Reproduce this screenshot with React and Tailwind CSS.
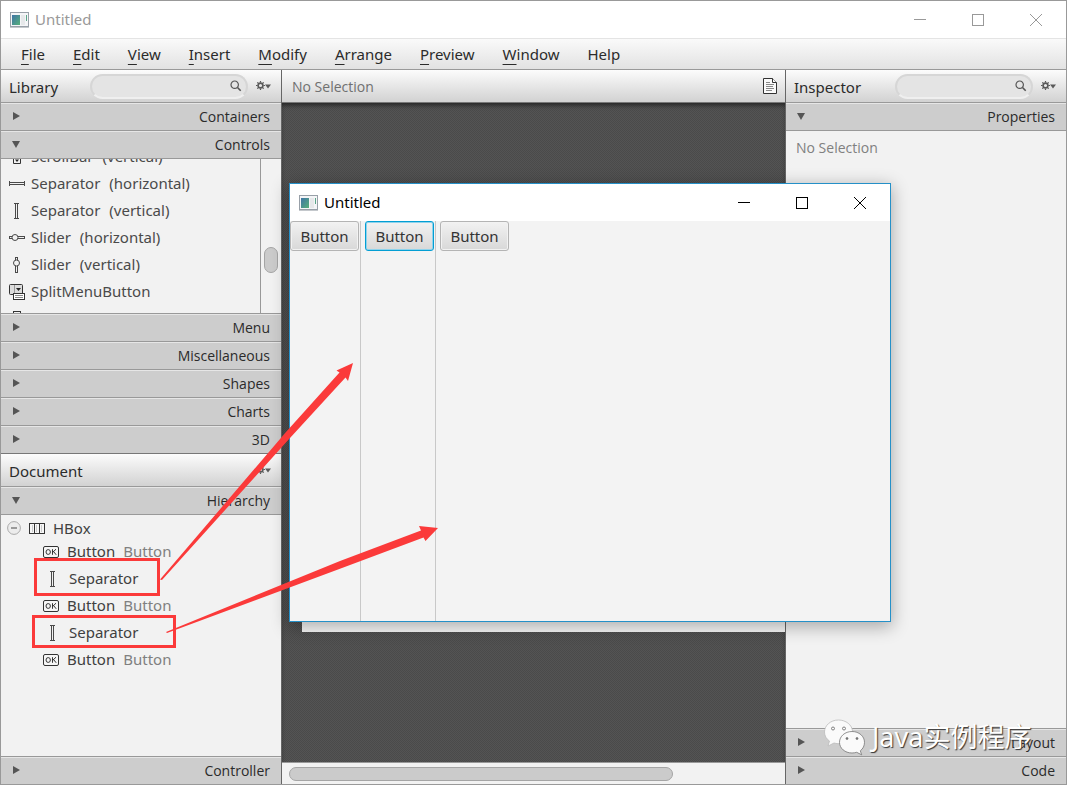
import React from 'react';

const MENUS = ['File', 'Edit', 'View', 'Insert', 'Modify', 'Arrange', 'Preview', 'Window'];

function AppIcon() {
  return (
    <svg width="19" height="16" viewBox="0 0 19 16" className="shrink-0">
      <defs>
        <linearGradient id="appIconFill" x1="0" y1="0" x2="1" y2="1">
          <stop offset="0" stopColor="#3f74a6" />
          <stop offset="1" stopColor="#56b07a" />
        </linearGradient>
      </defs>
      <rect x="0.5" y="0.5" width="18" height="14" fill="#f4f5f7" stroke="#98a0a8" />
      <rect x="2" y="3" width="8" height="10" fill="url(#appIconFill)" />
      <rect x="11" y="3" width="4" height="10" fill="#e6e8ea" />
      <rect x="16" y="3" width="1" height="6" fill="#5aa588" />
      <path d="M0 15.5h19" stroke="#c4c8cc" />
    </svg>
  );
}

function WindowControls({ color }) {
  return (
    <div className={`flex gap-[46px] ${color}`}>
      <button aria-label="Minimize">
        <svg width="12" height="12" viewBox="0 0 12 12" stroke="currentColor" shapeRendering="crispEdges">
          <path d="M0 5.5h12" />
        </svg>
      </button>
      <button aria-label="Maximize">
        <svg width="12" height="12" viewBox="0 0 12 12" fill="none" stroke="currentColor" shapeRendering="crispEdges">
          <rect x="0.5" y="0.5" width="11" height="11" />
        </svg>
      </button>
      <button aria-label="Close">
        <svg width="12" height="12" viewBox="0 0 12 12" stroke="currentColor">
          <path d="M0 0l12 12M12 0L0 12" />
        </svg>
      </button>
    </div>
  );
}

function Gear() {
  return (
    <button aria-label="Options" className="text-[#5a5a5a]">
      <svg width="15" height="10" viewBox="0 0 15 10" fill="none" stroke="currentColor">
        <circle cx="4.5" cy="4.5" r="2.4" strokeWidth="1.6" />
        <path d="M4.5 0v1.6M4.5 7.4V9M0 4.5h1.6M7.4 4.5H9M1.3 1.3l1.1 1.1M6.6 6.6l1.1 1.1M7.7 1.3L6.6 2.4M2.4 6.6L1.3 7.7" strokeWidth="1.2" />
        <path d="M9 3.5h6L12 7.5z" fill="currentColor" stroke="none" />
      </svg>
    </button>
  );
}

function PanelHeader({ title, search }) {
  return (
    <div className="flex h-[33px] shrink-0 items-center gap-2 border-b border-[#999] bg-linear-to-b from-[#fcfcfc] to-[#d2d2d2] pr-[10px] pl-2">
      <h2 className="grow pt-px text-[15px] leading-5 text-[#2b2b2b]">{title}</h2>
      {search && (
        <label className={`flex h-[25px] items-center rounded-full border-2 border-[#d6d6d6] border-b-[#efefef] bg-[#e4e4e4] pr-1 ${search}`}>
          <input type="text" aria-label={`Search ${title}`} className="w-full min-w-0 bg-transparent px-2 text-xs outline-none" />
          <svg width="12" height="12" viewBox="0 0 12 12" fill="none" stroke="#555" className="shrink-0">
            <circle cx="4.7" cy="4.7" r="3.7" strokeWidth="1.2" />
            <path d="M7.5 7.5l3.2 3.2" strokeWidth="1.6" />
          </svg>
        </label>
      )}
      <Gear />
    </div>
  );
}

function Pane({ title, open }) {
  return (
    <button className="flex h-7 w-full shrink-0 items-center justify-between border-b border-[#999] bg-[#cdcdcd] px-[11px] shadow-[inset_0_1px_0_#e6e6e6] last:h-[27px] last:border-b-0">
      <svg width="9" height="10" viewBox="0 0 9 10" fill="#555">
        {open ? <path d="M0 1h8L4 8z" /> : <path d="M1 0l7 4-7 4z" />}
      </svg>
      <span className="font-['Open_Sans',sans-serif] text-sm text-[#2b2b2b]">{title}</span>
    </button>
  );
}

function SeparatorIcon({ vertical }) {
  return (
    <svg width="16" height="16" viewBox="0 0 16 16" fill="none" stroke="#4a4a4a" shapeRendering="crispEdges" className="shrink-0">
      {vertical ? (
        <path d="M6.5 1v14M8.5 1v14M5 0.5h5M5 15.5h5" />
      ) : (
        <path d="M1 6.5h14M1 8.5h14M0.5 5v5M15.5 5v5" />
      )}
    </svg>
  );
}

function SliderIcon({ vertical }) {
  return (
    <svg width="16" height="16" viewBox="0 0 16 16" fill="#f2f2f2" stroke="#4a4a4a" className="shrink-0">
      {vertical ? (
        <>
          <rect x="6.5" y="0.5" width="2" height="15" />
          <circle cx="7.5" cy="6" r="3" />
        </>
      ) : (
        <>
          <rect x="0.5" y="6.5" width="15" height="2" />
          <circle cx="6" cy="7.5" r="3" />
        </>
      )}
    </svg>
  );
}

function ScrollBarIcon() {
  return (
    <svg width="16" height="16" viewBox="0 0 16 16" fill="none" stroke="#333" className="shrink-0">
      <path d="M4.5 0v14.5h7V0M4.5 0.5h7M4.5 8.5h7" />
      <path d="M6 10.5h4L8 13z" fill="#222" stroke="none" />
    </svg>
  );
}

function SplitMenuIcon() {
  return (
    <svg width="16" height="16" viewBox="0 0 16 16" fill="none" stroke="#333" className="shrink-0">
      <rect x="0.5" y="0.5" width="13" height="10" rx="1" fill="#dcdcdc" />
      <path d="M5.5 1v9" stroke="#999" />
      <path d="M7 4h5L9.5 7z" fill="#222" stroke="none" />
      <rect x="4.5" y="9.5" width="11" height="6" fill="#fff" />
      <path d="M6 11.5h8M6 13.5h8" stroke="#888" />
    </svg>
  );
}

function OkIcon() {
  return (
    <svg width="16" height="12" viewBox="0 0 16 12" fill="none" stroke="#333" className="shrink-0">
      <rect x="0.5" y="0.5" width="15" height="11" rx="1.5" fill="#f6f6f6" />
      <ellipse cx="5.2" cy="6" rx="2.2" ry="2.4" />
      <path d="M9.5 3.2v5.6M13 3.2L9.9 6.2M10.6 5.6L13.2 8.8" />
    </svg>
  );
}

const CONTROLS = [
  { label: 'ScrollBar', kind: '(vertical)', icon: <ScrollBarIcon /> },
  { label: 'Separator', kind: '(horizontal)', icon: <SeparatorIcon /> },
  { label: 'Separator', kind: '(vertical)', icon: <SeparatorIcon vertical /> },
  { label: 'Slider', kind: '(horizontal)', icon: <SliderIcon /> },
  { label: 'Slider', kind: '(vertical)', icon: <SliderIcon vertical /> },
  { label: 'SplitMenuButton', icon: <SplitMenuIcon /> },
  { label: 'SubScene', icon: <ScrollBarIcon /> },
];

function Library() {
  return (
    <section className="shrink-0 border-b border-[#777]">
      <PanelHeader title="Library" search="w-[158px]" />
      <Pane title="Containers" />
      <Pane title="Controls" open />
      <div className="flex h-[155px] overflow-hidden border-b border-[#999]">
        <ul className="-mt-4 grow pl-2">
          {CONTROLS.map((c) => (
            <li key={c.label + c.kind} className="flex h-[27px] items-center gap-[6px] text-[15px] text-[#4a4a4a]">
              {c.icon}
              <span>{c.label}</span>
              {c.kind && <span className="pl-[3px]">{c.kind}</span>}
            </li>
          ))}
        </ul>
        <div className="w-[21px] shrink-0 border-l border-[#999] px-[3px] pt-[88px]">
          <div className="h-[26px] w-[14px] rounded-full border border-[#a5a5a5] bg-[#cbcbcb]" />
        </div>
      </div>
      {['Menu', 'Miscellaneous', 'Shapes', 'Charts', '3D'].map((t) => (
        <Pane key={t} title={t} />
      ))}
    </section>
  );
}

function TreeButton() {
  return (
    <li className="flex h-[27px] items-center gap-2 pl-[42px]">
      <OkIcon />
      <span>Button</span>
      <span className="text-[#808080]">Button</span>
    </li>
  );
}

function TreeSeparator() {
  return (
    <li className="flex h-[27px] items-center gap-2 pl-11">
      <SeparatorIcon vertical />
      <span>Separator</span>
    </li>
  );
}

function DocumentPanel() {
  return (
    <section className="flex grow flex-col">
      <PanelHeader title="Document" />
      <Pane title="Hierarchy" open />
      <ul className="grow border-b border-[#999] text-[15px] text-[#404040]">
        <li className="flex h-[23px] items-center gap-2 pt-[3px] pl-[6px]">
          <button aria-label="Collapse HBox">
            <svg width="14" height="14" viewBox="0 0 14 14" fill="#ececec" stroke="#aaa">
              <circle cx="7" cy="7" r="6.4" />
              <path d="M4 7h6" stroke="#777" strokeWidth="1.4" />
            </svg>
          </button>
          <svg width="16" height="11" viewBox="0 0 16 11" fill="#f6f6f6" stroke="#333" shapeRendering="crispEdges">
            <rect x="0.5" y="0.5" width="15" height="10" />
            <path d="M5.5 1v9M10.5 1v9" />
            <path d="M3.5 2v7M7.5 2v7M12.5 2v7" stroke="#ccc" />
          </svg>
          <span>HBox</span>
        </li>
        <TreeButton />
        <TreeSeparator />
        <TreeButton />
        <TreeSeparator />
        <TreeButton />
      </ul>
      <Pane title="Controller" />
    </section>
  );
}

function Editor() {
  return (
    <main className="flex min-w-0 grow flex-col border-x border-[#666]">
      <div className="flex h-[33px] shrink-0 items-center justify-between border-b border-[#777] bg-linear-to-b from-[#fcfcfc] to-[#d2d2d2] pr-2 pl-[10px]">
        <span className="pt-[2px] font-['Open_Sans',sans-serif] text-sm text-[#707070]">No Selection</span>
        <svg width="14" height="16" viewBox="0 0 14 16" fill="#fafafa" stroke="#333">
          <path d="M0.5 0.5h9l4 4v11H0.5z" />
          <path d="M9.5 0.5v4h4" />
          <path d="M3 4.5h4M3 6.5h8M3 8.5h7M3 10.5h8M3 12.5h6" stroke="#888" />
        </svg>
      </div>
      <div className="grow bg-[repeating-conic-gradient(#4a4a4a_0_25%,#545454_0_50%)] bg-[length:2px_2px] pt-[100px] pl-5 shadow-[inset_0_4px_5px_-2px_#222]">
        <div className="h-[429px] bg-[#f8f8f8]" />
      </div>
      <div className="flex h-[22px] shrink-0 items-center border-t border-[#999] bg-[#f2f2f2] px-[7px]">
        <div className="h-[14px] w-[384px] rounded-full border border-[#a5a5a5] bg-[#cbcbcb]" />
      </div>
    </main>
  );
}

function Inspector() {
  return (
    <aside className="flex w-[280px] shrink-0 flex-col">
      <PanelHeader title="Inspector" search="w-[138px]" />
      <Pane title="Properties" open />
      <p className="grow border-b border-[#999] px-[10px] pt-[7px] font-['Open_Sans',sans-serif] text-sm text-[#808080]">No Selection</p>
      <Pane title="Layout" />
      <Pane title="Code" />
    </aside>
  );
}

function PreviewButton({ focused }) {
  return (
    <button
      className={
        focused
          ? 'h-[30px] w-[69px] rounded-[3px] border border-[#039ed3] bg-linear-to-b from-[#f2f2f2] to-[#d8d8d8] text-[15px] text-[#333] shadow-[inset_0_0_0_1px_#8fd3ec]'
          : 'h-[30px] w-[69px] rounded-[3px] border border-[#b4b4b4] bg-linear-to-b from-[#f2f2f2] to-[#d8d8d8] text-[15px] text-[#333] shadow-[inset_0_0_0_1px_#f2f2f2]'
      }
    >
      Button
    </button>
  );
}

function Divider() {
  return (
    <div className="w-[6px] self-stretch pl-px">
      <div className="h-full w-px bg-[#c8c8c8]" />
    </div>
  );
}

function PreviewWindow() {
  return (
    <div className="absolute top-[182px] left-[288px] flex h-[439px] w-[602px] flex-col border border-[#2590c8] bg-[#f3f3f3] shadow-[0_4px_16px_1px_rgba(0,0,0,0.3)]">
      <div className="flex h-[37px] shrink-0 items-center justify-between bg-white pr-6 pl-[9px]">
        <div className="flex items-center gap-[6px] text-[15px] text-black">
          <AppIcon />
          <span>Untitled</span>
        </div>
        <WindowControls color="text-black" />
      </div>
      <div className="flex grow items-start">
        <PreviewButton />
        <Divider />
        <PreviewButton focused />
        <Divider />
        <PreviewButton />
      </div>
    </div>
  );
}

// red boxes and arrows pointing from the tree to the separators
function Annotations() {
  return (
    <svg width="450" height="660" viewBox="1 1 450 660" className="pointer-events-none absolute top-0 left-0" fill="#fb3a3a">
      <rect x="35.5" y="559.5" width="123" height="35" fill="none" stroke="#fb3a3a" strokeWidth="3" />
      <rect x="33.5" y="616.5" width="141" height="30" fill="none" stroke="#fb3a3a" strokeWidth="3" />
      <path d="M160 579.5L286 432 339.500 372.500 336.500 370.500 353 363 348 381 345.500 377.500 290 438 162 580z" />
      <path d="M166 632L340 561 421 530.500 419 526 438 528 425.500 541 423.500 537.500 342 568 167 633z" />
    </svg>
  );
}

function Watermark() {
  return (
    <div className="pointer-events-none absolute top-[716px] left-[822px] flex items-center gap-[7px]">
      <svg width="42" height="38" viewBox="0 0 42 38" fill="#fafafa" stroke="#777" strokeWidth="0.8">
        <path stroke="#bbb" d="M15.5 2C7.5 2 1.5 7.5 1.5 14c0 4 2 7 5 9l-1.500 5 6-3c2 .6 4 .8 6 .7C28 25 30 19 29.500 13 29 7 23 2 15.500 2z" />
        <path d="M29 13.500c-7 0-12.500 4.800-12.500 10.800S22 35 29 35c1.700 0 3.200-.3 4.700-.7l5 2.500-1.400-4c2.700-2 4.200-5 4.200-8.500 0-6-5.500-10.800-12.500-10.800z" />
        <g fill="none" stroke="#666">
          <circle cx="10" cy="10.500" r="1.500" />
          <circle cx="21" cy="10.500" r="1.500" />
        </g>
        <g fill="#666">
          <circle cx="24" cy="20.500" r="1" />
          <circle cx="34" cy="20.500" r="1" />
        </g>
      </svg>
      <span className="font-['Noto_Sans','Noto_Sans_CJK_SC',sans-serif] text-[27px] leading-10 text-white text-shadow-[1px_1px_1px_#333]">
        Java实例程序
      </span>
    </div>
  );
}

function App() {
  return (
    <div className="relative flex h-screen flex-col overflow-hidden border border-[#999] bg-[#f2f2f2] font-['Noto_Sans',sans-serif]">
      <header className="flex h-[37px] shrink-0 items-center justify-between bg-white pr-6 pl-[9px]">
        <div className="flex items-center gap-[6px] text-[15px] text-[#999]">
          <AppIcon />
          <h1>Untitled</h1>
        </div>
        <WindowControls color="text-[#999]" />
      </header>
      <nav className="flex h-8 shrink-0 items-center gap-7 border-t border-b border-t-[#e4e4e4] border-b-[#999] bg-linear-to-b from-[#fafafa] to-[#e2e2e2] px-5 text-[15px] text-[#2b2b2b]">
        {MENUS.map((m) => (
          <button key={m}>
            <span className="underline underline-offset-4">{m[0]}</span>
            {m.slice(1)}
          </button>
        ))}
        <button>Help</button>
      </nav>
      <div className="flex min-h-0 grow">
        <aside className="flex w-[280px] shrink-0 flex-col">
          <Library />
          <DocumentPanel />
        </aside>
        <Editor />
        <Inspector />
      </div>
      <PreviewWindow />
      <Annotations />
      <Watermark />
    </div>
  );
}

export default App;
